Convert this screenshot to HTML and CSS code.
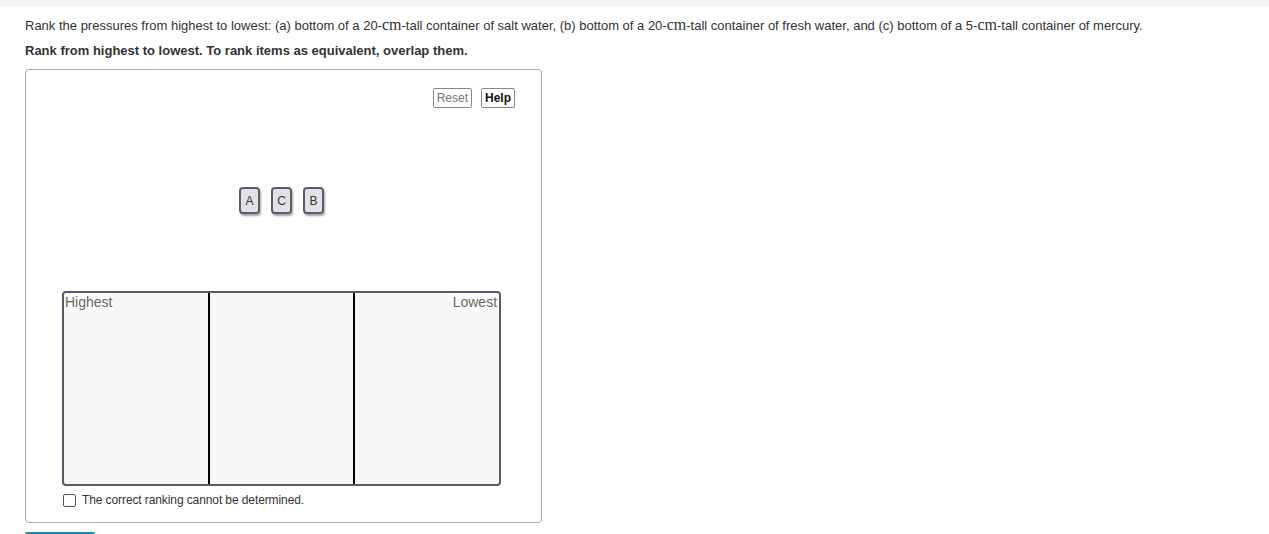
FILE: index.html
```html
<!DOCTYPE html>
<html lang="en">
<head>
  <meta charset="UTF-8" />
  <title>Ranking</title>
  <link rel="stylesheet" href="styles.css">
</head>
<body>
  <div class="topbar"></div>
  <div class="problem">
    <p class="question">Rank the pressures from highest to lowest: (a) bottom of a 20-<span class="unit">cm</span>-tall container of salt water, (b) bottom of a 20-<span class="unit">cm</span>-tall container of fresh water, and (c) bottom of a 5-<span class="unit">cm</span>-tall container of mercury.</p>
    <p class="instruction">Rank from highest to lowest. To rank items as equivalent, overlap them.</p>

    <div class="card">
      <div class="tools">
        <button class="tool reset">Reset</button>
        <button class="tool help">Help</button>
      </div>
      <div class="tiles">
        <div class="tile">A</div>
        <div class="tile">C</div>
        <div class="tile">B</div>
      </div>
      <div class="ranking">
        <div class="slot"><span class="label">Highest</span></div>
        <div class="slot"></div>
        <div class="slot last"><span class="label">Lowest</span></div>
      </div>
      <label class="cannot">
        <span class="box"></span>
        The correct ranking cannot be determined.
      </label>
    </div>
    <div class="submit-edge"></div>
  </div>
</body>
</html>
```

FILE: styles.css
```css
* { box-sizing: border-box; margin: 0; padding: 0; }
body {
  font-family: Arial, 'Liberation Sans', sans-serif;
  color: #333;
  background: #fff;
  height: 534px;
  overflow: hidden;
}
.topbar { height: 6px; background: #f4f4f4; }
.problem { padding: 12px 25px 0; }
.question { font-size: 13px; line-height: 16px; }
.unit { font-family: 'Liberation Serif', 'Times New Roman', serif; font-size: 16px; line-height: 10px; }
.instruction { font-size: 13px; font-weight: bold; line-height: 16px; margin-top: 9px; }

.card {
  width: 517px; height: 454px;
  margin-top: 10px;
  border: 1px solid #aaa; border-radius: 4px;
  padding: 18px 26px 0 36px;
}
.tools { display: flex; justify-content: flex-end; gap: 9px; }
.tool {
  font-family: Arial, 'Liberation Sans', sans-serif;
  font-size: 12px; line-height: 16px;
  padding: 0 3px; height: 20px;
  background: #fff; border: 1px solid #888; border-radius: 2px;
}
.tool.reset { color: #777; }
.tool.help { color: #111; font-weight: bold; }

.tiles { display: flex; gap: 11px; padding-left: 177px; margin-top: 79px; }
.tile {
  width: 21px; height: 27px;
  background: #e2e2e4; border: 2px solid #5e5b6e; border-radius: 4px;
  box-shadow: 1px 2px 2px rgba(0,0,0,0.35);
  display: flex; align-items: center; justify-content: center;
  font-size: 12px; color: #333;
}

.ranking {
  display: flex;
  width: 439px; height: 195px;
  margin-top: 77px;
  background: #f7f7f7;
  border: 2px solid #5c5a6a; border-radius: 4px;
}
.slot { flex: 1; border-right: 2px solid #000; }
.slot.last { border-right: none; text-align: right; }
.label {
  display: inline-block; font-size: 14px; color: #666;
  background: #fbfbfb; padding: 0 2px 3px 1px; line-height: 16px;
}
.slot.last .label { padding: 0 2px 3px 3px; }

.cannot {
  display: flex; align-items: center; gap: 6px;
  margin-top: 7px; margin-left: 1px;
  font-size: 12px; letter-spacing: -0.1px; color: #333;
}
.box { width: 13px; height: 13px; border: 1px solid #555; border-radius: 2px; background: #fff; }

.submit-edge { width: 70px; height: 3px; background: #1a8aa8; margin-top: 9px; border-radius: 2px 2px 0 0; }
```
